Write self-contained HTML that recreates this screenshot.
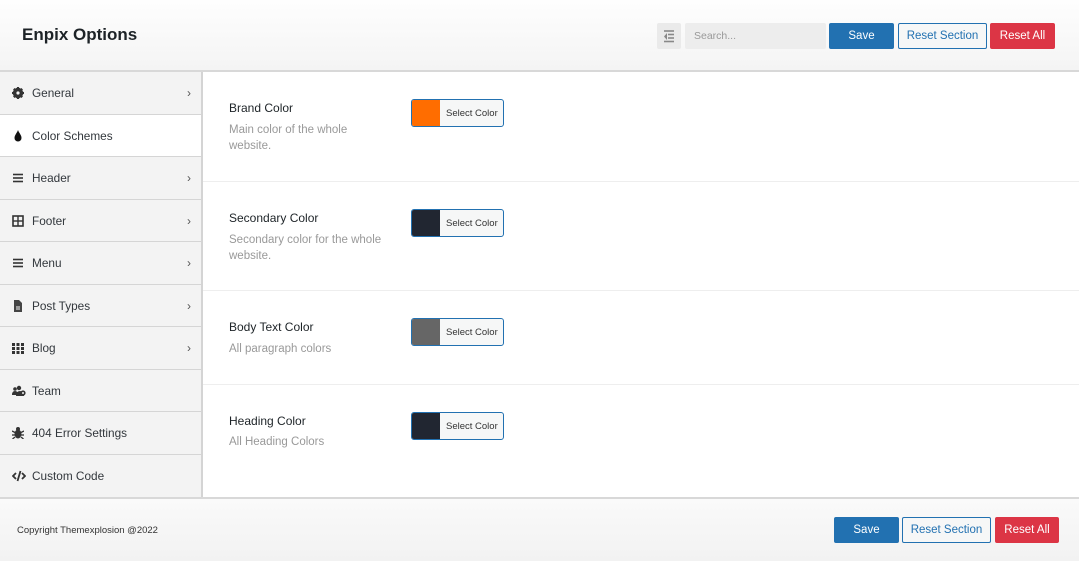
<!DOCTYPE html>
<html><head><meta charset="utf-8"><style>
*{box-sizing:border-box;margin:0;padding:0}
body{width:1079px;height:561px;overflow:hidden;font-family:"Liberation Sans",sans-serif;background:#fff;position:relative;color:#23282d}
.hdr{position:absolute;left:0;top:0;width:1079px;height:72px;background:linear-gradient(#fefefe,#f4f4f4);border-bottom:2px solid #d8d8d8}
.hdr h1{position:absolute;left:22px;top:25px;font-size:17px;font-weight:bold;color:#1d2327}
.ic{position:absolute;left:657px;top:23px;width:24px;height:26px;background:#eaeaea;border-radius:2px}
.srch{position:absolute;left:685px;top:23px;width:141px;height:26px;background:#ededed;border-radius:2px;font-size:10.5px;color:#999;padding:7px 9px}
.btn{position:absolute;height:26px;font-size:11.5px;line-height:24px;text-align:center;border-radius:2px}
.save{background:#2271b1;color:#fff;border:1px solid #2271b1}
.rs{background:#f6f7f7;color:#2271b1;border:1px solid #2271b1}
.ra{background:#dc3545;color:#fff;border:1px solid #dc3545}
.side{position:absolute;left:0;top:72px;width:203px;height:425px;background:#f3f3f3;border-right:2px solid #d4d4d4}
.it{height:42.5px;border-bottom:1px solid #d5d5d5;position:relative;font-size:11.8px;color:#32373c;line-height:42px;padding-left:32px}
.it.act{background:#fff}
.it svg{position:absolute;left:12px;top:15px}
.it .a{position:absolute;right:10px;top:0;font-size:12px;color:#555}
.sec{position:absolute;left:203px;width:876px;border-bottom:1px solid #eee}
.t{position:absolute;left:26px;font-size:12px;color:#1d2327}
.d{position:absolute;left:26px;font-size:11.5px;color:#999;line-height:16px;width:158px}
.cp{position:absolute;left:208px;width:93px;height:28px;border:1px solid #2271b1;border-radius:3px;background:#f6f7f7;overflow:hidden;font-size:9.5px;color:#333}
.cp i{position:absolute;left:0;top:0;width:28px;height:26px}
.cp span{position:absolute;left:34px;top:8px}
.ftr{position:absolute;left:0;top:497px;width:1079px;height:64px;background:linear-gradient(#fafafa,#f2f2f2);border-top:2px solid #d8d8d8}
</style></head><body>
<div class="hdr"><h1>Enpix Options</h1>
<div class="ic"><svg width="24" height="26" viewBox="0 0 24 26"><g stroke="#888" stroke-width="1.6"><line x1="7" y1="8" x2="17" y2="8"/><line x1="11" y1="11.5" x2="17" y2="11.5"/><line x1="11" y1="15" x2="17" y2="15"/><line x1="7" y1="18.5" x2="17" y2="18.5"/></g><path d="M10 10v7l-3-3.5z" fill="#888"/></svg></div>
<div class="srch">Search...</div>
<div class="btn save" style="left:829px;top:23px;width:65px">Save</div>
<div class="btn rs" style="left:898px;top:23px;width:89px">Reset Section</div>
<div class="btn ra" style="left:990px;top:23px;width:65px">Reset All</div>
</div>
<div class="side">
<div class="it"><svg width="12" height="12" viewBox="0 0 12 12"><circle cx="6" cy="6" r="4" fill="none" stroke="#333" stroke-width="2.4"/><g stroke="#333" stroke-width="2.2"><line x1="6" y1="0" x2="6" y2="12"/><line x1="0" y1="6" x2="12" y2="6"/><line x1="1.8" y1="1.8" x2="10.2" y2="10.2"/><line x1="10.2" y1="1.8" x2="1.8" y2="10.2"/></g><circle cx="6" cy="6" r="1.6" fill="#f3f3f3"/></svg>General<span class="a">›</span></div>
<div class="it act"><svg width="12" height="12" viewBox="0 0 12 12"><path d="M6 0C5 3 2.5 5 2.5 8a3.5 3.5 0 0 0 7 0C9.5 5 7 3 6 0z" fill="#111"/></svg>Color Schemes</div>
<div class="it"><svg width="12" height="12" viewBox="0 0 12 12"><g stroke="#333" stroke-width="1.6"><line x1="1" y1="2.5" x2="11" y2="2.5"/><line x1="1" y1="6" x2="11" y2="6"/><line x1="1" y1="9.5" x2="11" y2="9.5"/></g></svg>Header<span class="a">›</span></div>
<div class="it"><svg width="12" height="12" viewBox="0 0 12 12"><rect x="1" y="1" width="10" height="10" fill="none" stroke="#333" stroke-width="1.6"/><line x1="6" y1="1" x2="6" y2="11" stroke="#333" stroke-width="1.4"/><line x1="1" y1="6" x2="11" y2="6" stroke="#333" stroke-width="1.4"/></svg>Footer<span class="a">›</span></div>
<div class="it"><svg width="12" height="12" viewBox="0 0 12 12"><g stroke="#333" stroke-width="1.6"><line x1="1" y1="2.5" x2="11" y2="2.5"/><line x1="1" y1="6" x2="11" y2="6"/><line x1="1" y1="9.5" x2="11" y2="9.5"/></g></svg>Menu<span class="a">›</span></div>
<div class="it"><svg width="12" height="12" viewBox="0 0 12 12"><path d="M2 0h5l3 3v9H2z" fill="#444"/><g stroke="#f3f3f3"><line x1="4" y1="7" x2="8" y2="7"/><line x1="4" y1="9" x2="8" y2="9"/></g></svg>Post Types<span class="a">›</span></div>
<div class="it"><svg width="12" height="12" viewBox="0 0 12 12" fill="#333"><rect x="0" y="1" width="3" height="3"/><rect x="4.5" y="1" width="3" height="3"/><rect x="9" y="1" width="3" height="3"/><rect x="0" y="5" width="3" height="3"/><rect x="4.5" y="5" width="3" height="3"/><rect x="9" y="5" width="3" height="3"/><rect x="0" y="9" width="3" height="3"/><rect x="4.5" y="9" width="3" height="3"/><rect x="9" y="9" width="3" height="3"/></svg>Blog<span class="a">›</span></div>
<div class="it"><svg width="14" height="12" viewBox="0 0 14 12" fill="#333"><circle cx="3" cy="4" r="1.8"/><circle cx="7" cy="3" r="2.2"/><path d="M0 10q0-4 3-4t3 4zM4 11q0-5 4-5t4 5z"/><circle cx="11" cy="8" r="2.6" fill="#333"/><circle cx="11" cy="8" r="1" fill="#f3f3f3"/></svg>Team</div>
<div class="it"><svg width="12" height="12" viewBox="0 0 12 12"><ellipse cx="6" cy="7" rx="3.5" ry="4.5" fill="#333"/><circle cx="6" cy="2" r="2" fill="#333"/><g stroke="#333" stroke-width="1.3"><line x1="0" y1="4" x2="3" y2="5.5"/><line x1="12" y1="4" x2="9" y2="5.5"/><line x1="0" y1="8" x2="3" y2="8"/><line x1="12" y1="8" x2="9" y2="8"/><line x1="0.5" y1="12" x2="3" y2="10"/><line x1="11.5" y1="12" x2="9" y2="10"/></g></svg>404 Error Settings</div>
<div class="it" style="border-bottom:none"><svg width="14" height="12" viewBox="0 0 14 12" fill="none" stroke="#333" stroke-width="1.8"><path d="M4 3L1 6l3 3M10 3l3 3-3 3M8.5 1L5.5 11"/></svg>Custom Code</div>
</div>
<div class="sec" style="top:72px;height:110px"><div class="t" style="top:29px">Brand Color</div><div class="d" style="top:50px">Main color of the whole website.</div><div class="cp" style="top:27px"><i style="background:#ff6d00"></i><span>Select Color</span></div></div>
<div class="sec" style="top:182px;height:109px"><div class="t" style="top:29px">Secondary Color</div><div class="d" style="top:50px">Secondary color for the whole website.</div><div class="cp" style="top:27px"><i style="background:#212631"></i><span>Select Color</span></div></div>
<div class="sec" style="top:291px;height:94px"><div class="t" style="top:29px">Body Text Color</div><div class="d" style="top:50px">All paragraph colors</div><div class="cp" style="top:27px"><i style="background:#666"></i><span>Select Color</span></div></div>
<div class="sec" style="top:385px;height:112px;border:none"><div class="t" style="top:29px">Heading Color</div><div class="d" style="top:49px">All Heading Colors</div><div class="cp" style="top:27px"><i style="background:#212631"></i><span>Select Color</span></div></div>
<div class="ftr"><div style="position:absolute;left:17px;top:26px;font-size:9.5px;color:#333">Copyright Themexplosion @2022</div>
<div class="btn save" style="left:834px;top:18px;width:65px">Save</div>
<div class="btn rs" style="left:902px;top:18px;width:89px">Reset Section</div>
<div class="btn ra" style="left:995px;top:18px;width:64px">Reset All</div></div>
</body></html>
